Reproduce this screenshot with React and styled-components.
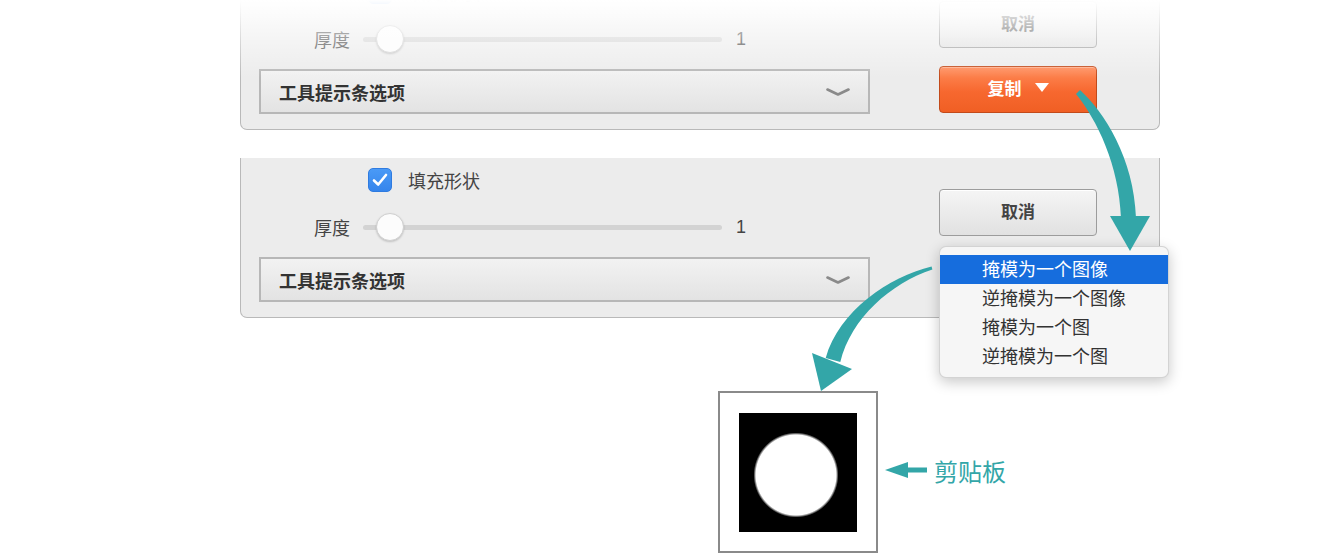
import React from "react";
import styled, { createGlobalStyle } from "styled-components";

const Global = createGlobalStyle`
  html, body { margin: 0; padding: 0; background: #fff; }
  body { font-family: "Noto Sans CJK SC", "Noto Sans", sans-serif; }
`;

const Stage = styled.div`
  position: relative;
  width: 1340px;
  height: 560px;
  overflow: hidden;
  background: #fff;
`;

const Column = styled.div`
  display: flex;
  flex-direction: column;
  padding-left: 240px;
`;

const Panel = styled.section`
  position: relative;
  box-sizing: border-box;
  width: 920px;
  height: 160px;
  margin-top: ${(p) => p.$top}px;
  display: flex;
  padding: 0 62px 0 18px;
  background: #ececec;
  border: 1px solid #b9b9b9;
  border-top: none;
  border-radius: 0 0 7px 7px;
`;

const LeftCol = styled.div`
  width: 611px;
  display: flex;
  flex-direction: column;
  padding-top: 10px;
`;

const CheckRow = styled.label`
  display: flex;
  align-items: center;
  gap: 16px;
  height: 24px;
  padding-left: 109px;
  font-size: 18px;
  color: #444;
`;

const CheckBox = styled.span`
  width: 24px;
  height: 24px;
  box-sizing: border-box;
  border-radius: 5px;
  background: linear-gradient(#4a9af6, #3585ec);
  border: 1px solid #2f7be0;
  display: flex;
  align-items: center;
  justify-content: center;
`;

const SliderRow = styled.div`
  display: flex;
  align-items: center;
  height: 28px;
  margin-top: 21px;
  font-size: 18px;
  color: #444;
`;

const SliderLabel = styled.span`
  width: 91px;
  margin-right: 13px;
  text-align: right;
`;

const Track = styled.div`
  position: relative;
  width: 359px;
  height: 5px;
  border-radius: 3px;
  background: #d3d3d3;
`;

const Knob = styled.span`
  position: absolute;
  left: 13px;
  top: 50%;
  width: 28px;
  height: 28px;
  box-sizing: border-box;
  transform: translateY(-50%);
  border-radius: 50%;
  background: #fcfcfc;
  border: 1px solid #d0d0d0;
  box-shadow: 0 1px 2px rgba(0, 0, 0, 0.18);
`;

const Value = styled.span`
  margin-left: 14px;
  font-family: "Liberation Sans", "Noto Sans", sans-serif;
  font-size: 18px;
`;

const Dropdown = styled.div`
  box-sizing: border-box;
  height: 45px;
  margin-top: 16px;
  display: flex;
  align-items: center;
  justify-content: space-between;
  padding: 0 18px 0 18px;
  border: 2px solid #b7b7b7;
  background: linear-gradient(#f2f2f2, #e3e3e3);
  font-size: 18px;
  font-weight: 700;
  color: #333;
`;

const RightCol = styled.div`
  position: relative;
  width: 158px;
  margin-left: 69px;
  padding-top: 31px;
  display: flex;
  flex-direction: column;
  gap: 18px;
`;

const Button = styled.button`
  box-sizing: border-box;
  height: 47px;
  width: 158px;
  display: flex;
  align-items: center;
  justify-content: center;
  gap: 13px;
  border-radius: 4px;
  font-family: inherit;
  font-size: 17px;
  font-weight: 700;
  padding: 0 0 4px;
  border: 1px solid ${(p) => (p.$primary ? "#c24a1a" : "#9c9c9c")};
  color: ${(p) => (p.$primary ? "#fff" : "#444")};
  background: ${(p) =>
    p.$primary
      ? "linear-gradient(#ff8c5a, #f7682f 55%, #f05f24)"
      : "linear-gradient(#f5f5f5, #e1e1e1)"};
  box-shadow: ${(p) =>
    p.$primary ? "inset 0 1px 0 rgba(255,255,255,0.3)" : "inset 0 1px 0 #fff"};
`;

const Menu = styled.ul`
  position: absolute;
  top: 88px;
  left: 0;
  z-index: 2;
  width: 230px;
  box-sizing: border-box;
  margin: 0;
  padding: 8px 0 6px;
  list-style: none;
  background: #f6f6f6;
  border: 1px solid rgba(0, 0, 0, 0.14);
  border-radius: 7px;
  box-shadow: 0 4px 14px rgba(0, 0, 0, 0.22);
`;

const MenuItem = styled.li`
  box-sizing: border-box;
  height: 29px;
  line-height: 24px;
  display: flex;
  align-items: center;
  padding: 0 0 4px 42px;
  font-size: 18px;
  font-weight: 400;
  color: ${(p) => (p.$active ? "#fff" : "#333")};
  background: ${(p) => (p.$active ? "#166ddd" : "transparent")};
`;

const Fade = styled.div`
  position: absolute;
  left: 0;
  top: 0;
  width: 100%;
  height: 78px;
  pointer-events: none;
  background: linear-gradient(
    rgba(255, 255, 255, 1) 0px,
    rgba(255, 255, 255, 0.93) 6px,
    rgba(255, 255, 255, 0.45) 40px,
    rgba(255, 255, 255, 0) 78px
  );
`;

const ClipRow = styled.div`
  display: flex;
  align-items: center;
  margin-top: 73px;
  padding-left: 478px;
`;

const ClipBox = styled.div`
  box-sizing: border-box;
  width: 160px;
  height: 162px;
  padding: 20px 19px 19px 19px;
  border: 2px solid #8a8a8a;
  background: #fff;
`;

const MaskImage = styled.div`
  width: 118px;
  height: 119px;
  background: radial-gradient(
    circle at 57px 62px,
    #fff 0,
    #fff 40px,
    #000 42.5px
  );
`;

const ClipLabel = styled.div`
  display: flex;
  align-items: center;
  gap: 7px;
  margin-left: 7px;
  margin-top: -4px;
  font-size: 24px;
  font-weight: 400;
  color: #33a6a8;
`;

const Arrows = styled.svg`
  position: absolute;
  left: 0;
  top: 0;
  pointer-events: none;
  z-index: 3;
`;

function ToolPanel({ top, children }) {
  return (
    <Panel $top={top}>
      <LeftCol>
        <CheckRow>
          <CheckBox>
            <svg width="16" height="14" viewBox="0 0 16 14">
              <path
                d="M2 7.5 L6.2 11.5 L14 2"
                fill="none"
                stroke="#fff"
                strokeWidth="2.6"
                strokeLinecap="round"
                strokeLinejoin="round"
              />
            </svg>
          </CheckBox>
          填充形状
        </CheckRow>
        <SliderRow>
          <SliderLabel>厚度</SliderLabel>
          <Track>
            <Knob />
          </Track>
          <Value>1</Value>
        </SliderRow>
        <Dropdown>
          工具提示条选项
          <svg width="24" height="8" viewBox="0 0 24 8">
            <path
              d="M1.5 1.5 L12 6.5 L22.5 1.5"
              fill="none"
              stroke="#8a8a8a"
              strokeWidth="2.6"
              strokeLinecap="round"
              strokeLinejoin="round"
            />
          </svg>
        </Dropdown>
      </LeftCol>
      <RightCol>
        <Button>取消</Button>
        <Button $primary>
          复制
          <svg width="14" height="9" viewBox="0 0 14 9">
            <path d="M0 0 H14 L7 9 Z" fill="#fff" />
          </svg>
        </Button>
        {children}
      </RightCol>
    </Panel>
  );
}

const items = ["掩模为一个图像", "逆掩模为一个图像", "掩模为一个图", "逆掩模为一个图"];

export default function App() {
  return (
    <>
      <Global />
      <Stage>
        <Column>
          <ToolPanel top={-30} />
          <ToolPanel top={28}>
            <Menu>
              {items.map((t, i) => (
                <MenuItem key={t} $active={i === 0}>
                  {t}
                </MenuItem>
              ))}
            </Menu>
          </ToolPanel>
          <ClipRow>
            <ClipBox>
              <MaskImage />
            </ClipBox>
            <ClipLabel>
              <svg width="42" height="20" viewBox="0 0 42 20">
                <path d="M0 10 L23 2 L23 18 Z" fill="#33a6a8" />
                <rect x="21" y="7.5" width="21" height="5" fill="#33a6a8" />
              </svg>
              剪贴板
            </ClipLabel>
          </ClipRow>
        </Column>
        <Fade />
        <Arrows width="1340" height="560" viewBox="0 0 1340 560">
          <path
            d="M1080 90 C1104 112 1134 158 1136 218 L1121 218 C1119 165 1097 120 1076 94 Z"
            fill="#33a6a8"
          />
          <path d="M1110 216 L1150 216 L1130 251 Z" fill="#33a6a8" />
          <path
            d="M931.6 266.6 C889 277 839 311 825.7 358 L840.3 362 C851 318 891 283 932.4 269.4 Z"
            fill="#33a6a8"
          />
          <path d="M812 353 L852 369 L821 391 Z" fill="#33a6a8" />
        </Arrows>
      </Stage>
    </>
  );
}
